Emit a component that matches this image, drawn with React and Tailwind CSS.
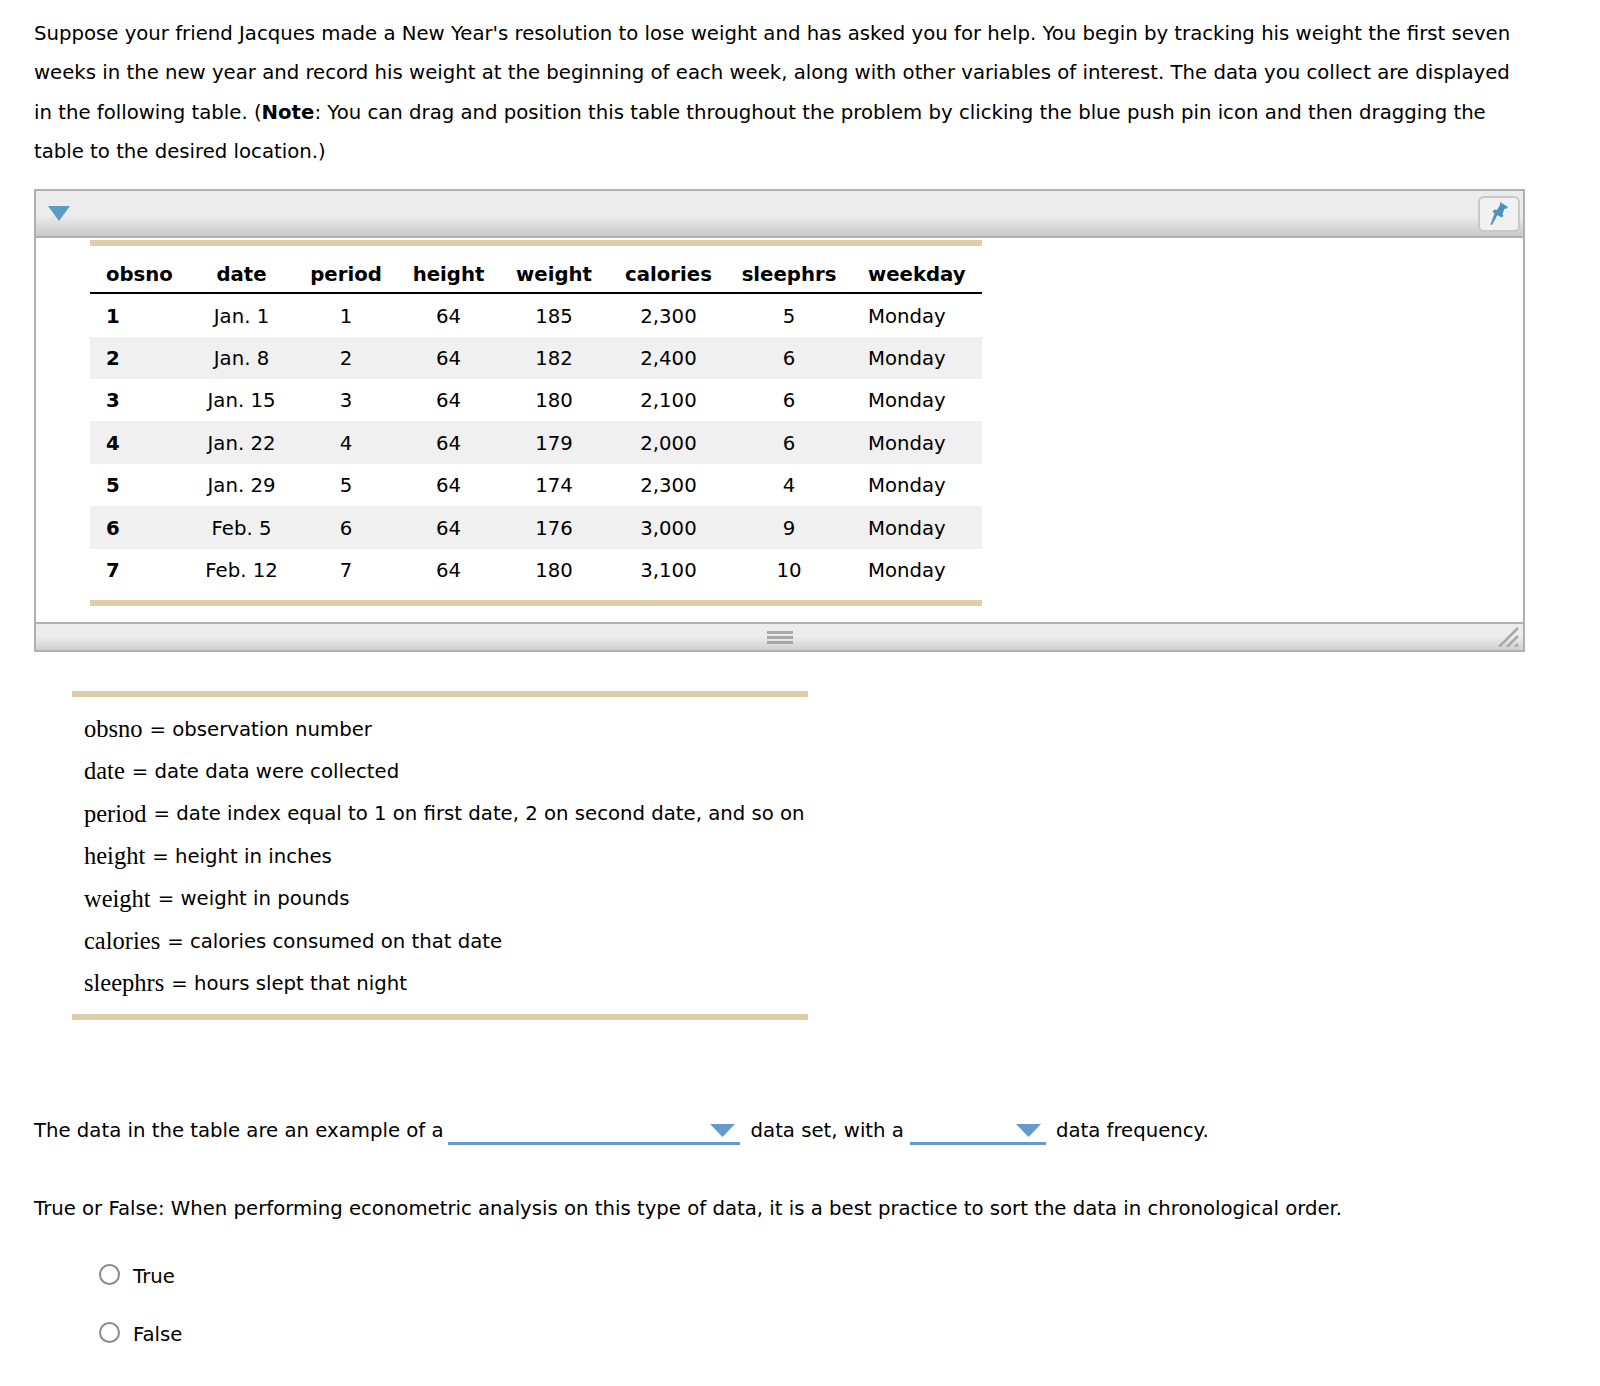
import React from 'react';

const rows = [
  ['1', 'Jan. 1', '1', '64', '185', '2,300', '5', 'Monday'],
  ['2', 'Jan. 8', '2', '64', '182', '2,400', '6', 'Monday'],
  ['3', 'Jan. 15', '3', '64', '180', '2,100', '6', 'Monday'],
  ['4', 'Jan. 22', '4', '64', '179', '2,000', '6', 'Monday'],
  ['5', 'Jan. 29', '5', '64', '174', '2,300', '4', 'Monday'],
  ['6', 'Feb. 5', '6', '64', '176', '3,000', '9', 'Monday'],
  ['7', 'Feb. 12', '7', '64', '180', '3,100', '10', 'Monday'],
];

const headers = ['obsno', 'date', 'period', 'height', 'weight', 'calories', 'sleephrs', 'weekday'];

const legend = [
  ['obsno', 'observation number'],
  ['date', 'date data were collected'],
  ['period', 'date index equal to 1 on first date, 2 on second date, and so on'],
  ['height', 'height in inches'],
  ['weight', 'weight in pounds'],
  ['calories', 'calories consumed on that date'],
  ['sleephrs', 'hours slept that night'],
];

function Dropdown({ width }) {
  return (
    <span className={`inline-flex h-[26px] justify-end items-center border-b-[3px] border-[#6699cc] align-middle pr-[5px] ${width}`}>
      <svg width="25" height="14" viewBox="0 0 25 14"><polygon points="0,1 25,1 12.5,14" fill="#6699cc" /></svg>
    </span>
  );
}

function Radio({ label }) {
  return (
    <label className="flex items-center gap-[13px] h-[58px]">
      <span className="w-[21px] h-[21px] rounded-full border-2 border-[#8a8a8a] bg-white -mt-[5px]" />
      <span>{label}</span>
    </label>
  );
}

export default function App() {
  return (
    <div className="min-h-[1386px] bg-white text-black pl-[34px] pt-[14px] w-[1600px] text-[19.7px] font-['DejaVu_Sans',sans-serif]">
      <p className="w-[1490px] leading-[39.3px]">
        Suppose your friend Jacques made a New Year's resolution to lose weight and has asked you for help. You begin by tracking his weight the first seven weeks in the new year and record his weight at the beginning of each week, along with other variables of interest. The data you collect are displayed in the following table. (<b>Note</b>: You can drag and position this table throughout the problem by clicking the blue push pin icon and then dragging the table to the desired location.)
      </p>

      <div className="mt-[18px] w-[1491px] border-2 border-[#b0b0b0]">
        <div className="h-[47px] flex items-center justify-between border-b-2 border-[#b0b0b0] bg-gradient-to-b from-[#ececec] from-55% to-[#c9c9c9] pl-[12px] pr-[3px]">
          <svg width="22" height="15" viewBox="0 0 22 15"><polygon points="0,0 22,0 11,15" fill="#5b9cc0" /></svg>
          <span className="w-[42px] h-[36px] rounded-[6px] border-2 border-[#c8c8c8] bg-[#f1f1f1] flex items-center justify-center">
            <svg width="22" height="26" viewBox="0 0 22 26" fill="#4a93ba">
              <path d="M12 1 L20 6 L18 8 L16.5 7.5 L14.5 13 L15.5 15 L13.5 16.5 L9.5 14 L4 24 L2.5 23.5 L6.5 12.5 L4.5 10.5 L6.5 8.5 L9 9 L12 4 Z" />
            </svg>
          </span>
        </div>

        <div className="h-[386px] pl-[54px] pt-[2px] border-b-2 border-[#b0b0b0]">
          <div className="w-[892px] border-y-[6px] border-[#dccfa8]">
            <table className="w-full table-fixed border-collapse">
              <colgroup>
                <col className="w-[98px]" />
                <col className="w-[107px]" />
                <col className="w-[102px]" />
                <col className="w-[103px]" />
                <col className="w-[108px]" />
                <col className="w-[121px]" />
                <col className="w-[120px]" />
                <col className="w-[133px]" />
              </colgroup>
              <thead>
                <tr className="h-[47px] border-b-2 border-black">
                  {headers.map((h, i) => (
                    <th key={h} className={i === 0 ? 'text-left pl-4 pt-[12px] font-bold' : i === 7 ? 'text-left pl-[19px] pt-[12px] font-bold' : 'text-center pt-[12px] font-bold'}>{h}</th>
                  ))}
                </tr>
              </thead>
              <tbody>
                {rows.map((r, i) => (
                  <tr key={r[0]} className={i === 0 ? 'h-[43.4px]' : i % 2 === 1 ? 'h-[42.4px] bg-[#f0f0f0]' : 'h-[42.4px]'}>
                    {r.map((c, j) => (
                      <td key={j} className={j === 0 ? 'pl-4 pt-[2px] font-bold' : j === 7 ? 'pl-[19px] pt-[2px]' : 'text-center pt-[2px]'}>{c}</td>
                    ))}
                  </tr>
                ))}
              </tbody>
            </table>
            <div className="h-[9px]" />
          </div>
        </div>

        <div className="relative h-[26px] flex items-center justify-center bg-gradient-to-b from-[#ececec] from-50% to-[#cfcfcf]">
          <div className="flex flex-col gap-[2px] w-[26px]">
            <span className="h-[3px] bg-[#a8a8a8]" />
            <span className="h-[3px] bg-[#a8a8a8]" />
            <span className="h-[3px] bg-[#a8a8a8]" />
          </div>
          <svg className="absolute right-[3px] bottom-[3px]" width="22" height="20" viewBox="0 0 22 20" stroke="#a8a8a8" strokeWidth="2.5" fill="none">
            <path d="M1 20 L20 1 M9 20 L20 9 M17 20 L20 17" />
          </svg>
        </div>
      </div>

      <div className="ml-[38px] mt-[39px] w-[736px] border-y-[6px] border-[#dccfa8] pt-[11px] pb-[9px] pl-[12px]">
        {legend.map(([name, text]) => (
          <div key={name} className="h-[42.4px] flex items-center whitespace-nowrap">
            <span className="font-['Liberation_Serif',serif] text-[24.5px] mr-[7px]">{name}</span>
            <span>= {text}</span>
          </div>
        ))}
      </div>

      <div className="mt-[91px] h-[40px] flex items-center whitespace-nowrap">
        <span>The data in the table are an example of a</span>
        <span className="ml-[4px]"><Dropdown width="w-[292px]" /></span>
        <span className="ml-[11px]">data set, with a</span>
        <span className="ml-[6px]"><Dropdown width="w-[136px]" /></span>
        <span className="ml-[10px]">data frequency.</span>
      </div>

      <p className="mt-[38px] leading-[39.3px]">True or False: When performing econometric analysis on this type of data, it is a best practice to sort the data in chronological order.</p>

      <div className="mt-[20px] ml-[65px]">
        <Radio label="True" />
        <Radio label="False" />
      </div>
    </div>
  );
}
